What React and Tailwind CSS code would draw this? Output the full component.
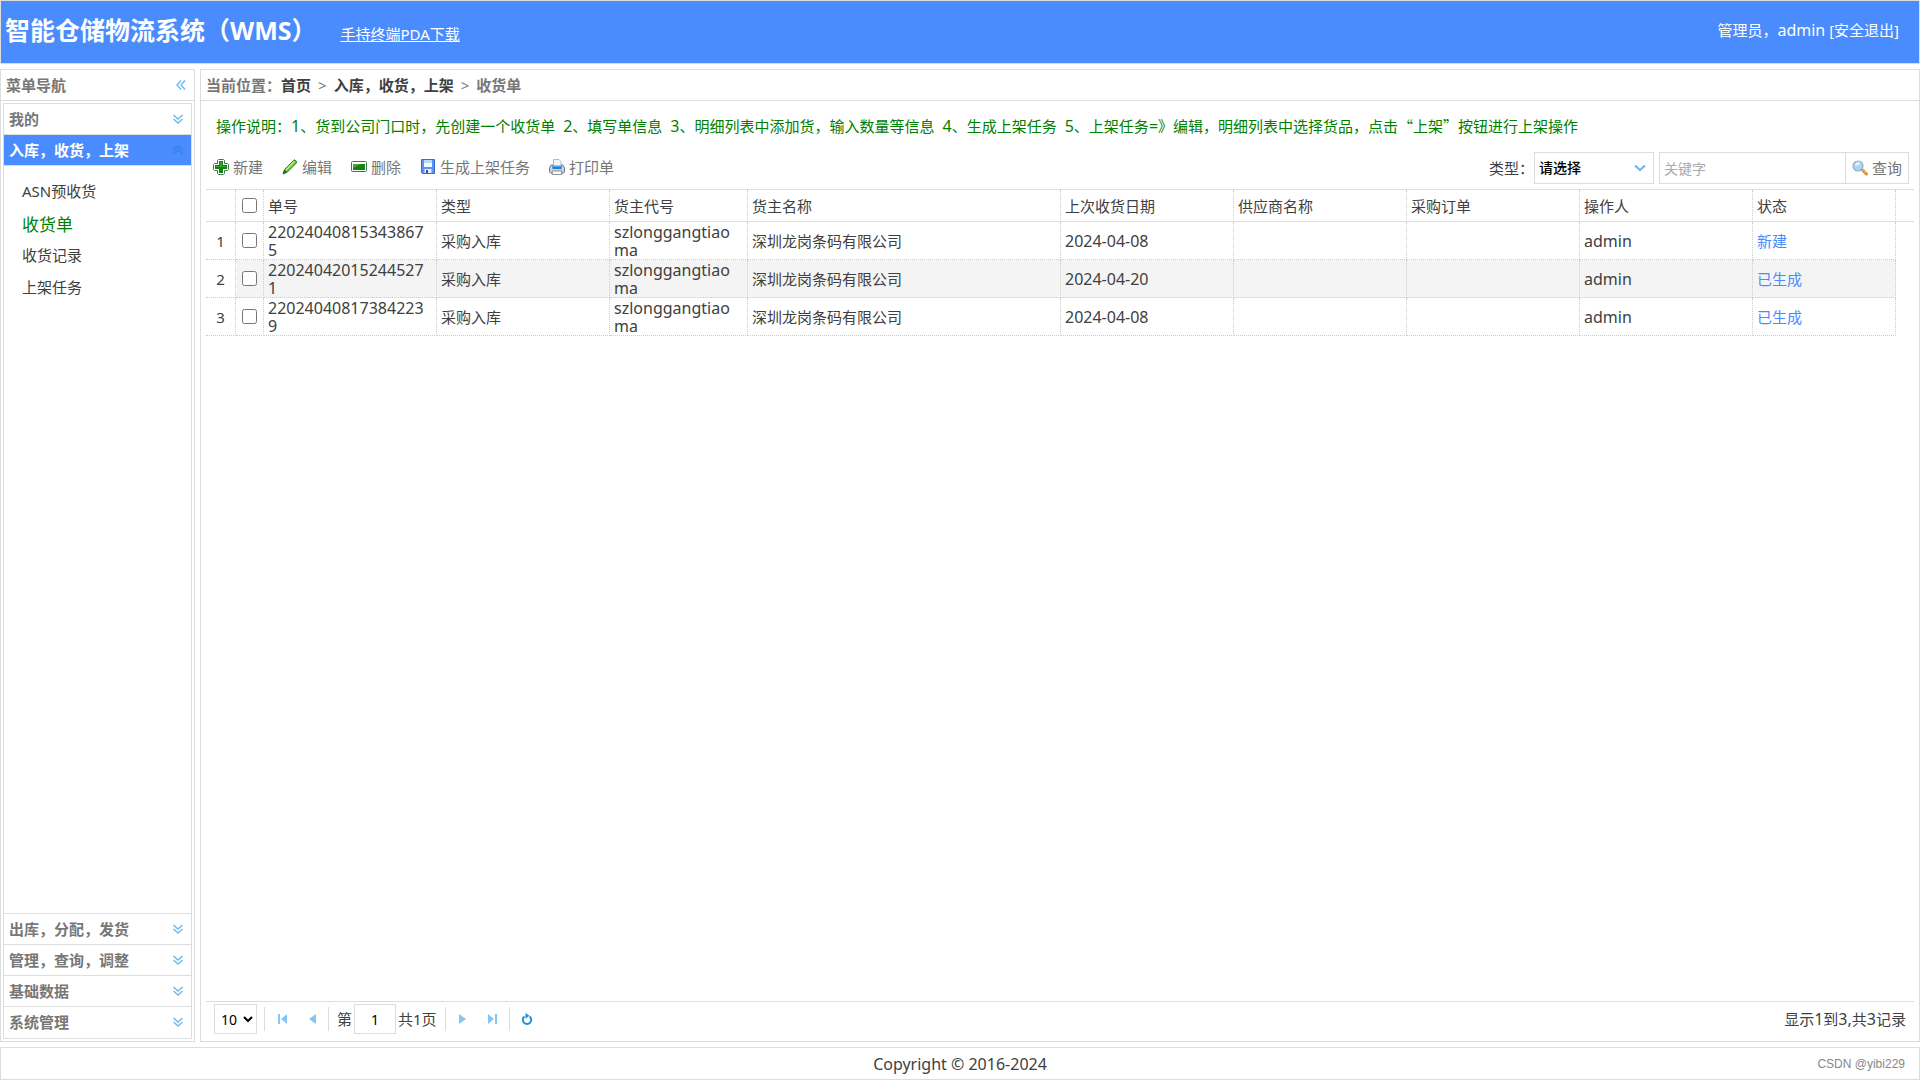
import React from "react";

const ROWS = [
  { no: "220240408153438675", type: "采购入库", code: "szlonggangtiaoma", name: "深圳龙岗条码有限公司", date: "2024-04-08", user: "admin", status: "新建" },
  { no: "220240420152445271", type: "采购入库", code: "szlonggangtiaoma", name: "深圳龙岗条码有限公司", date: "2024-04-20", user: "admin", status: "已生成" },
  { no: "220240408173842239", type: "采购入库", code: "szlonggangtiaoma", name: "深圳龙岗条码有限公司", date: "2024-04-08", user: "admin", status: "已生成" },
];

const HEADINGS = ["单号", "类型", "货主代号", "货主名称", "上次收货日期", "供应商名称", "采购订单", "操作人", "状态"];

const CELL = "border-r border-b border-dotted border-[#cccccc] px-1";

function DoubleChevron({ className }) {
  return (
    <svg className={className} width="10" height="10" viewBox="0 0 10 10" fill="none" stroke="currentColor" strokeWidth="1.4" aria-hidden="true">
      <path d="M.5 1l4.5 4 4.5-4M.5 5l4.5 4 4.5-4" />
    </svg>
  );
}

function AddIcon() {
  return (
    <svg width="16" height="16" viewBox="0 0 16 16" aria-hidden="true">
      <path d="M5.5.5h5l1 1v3h3l1 1v5l-1 1h-3v3l-1 1h-5l-1-1v-3h-3l-1-1v-5l1-1h3v-3z" fill="#fff" stroke="#3c7a4c" />
      <path d="M6 2h4v4h4v4h-4v4H6v-4H2V6h4z" fill="#128412" />
      <path d="M7 3h2v4h4v1H3V7h4z" fill="#4fb43c" opacity=".7" />
    </svg>
  );
}

function PencilIcon() {
  return (
    <svg width="16" height="16" viewBox="0 0 16 16" aria-hidden="true">
      <path d="M1 15l1.6-4.6L11 2l1.6-1.2 2.2 1.8-1 2L5.4 13z" fill="#5fc62a" stroke="#2f7d2a" strokeLinejoin="round" />
      <path d="M4 11l8.4-8.6" stroke="#c4f08c" strokeWidth="1.4" />
      <path d="M1 15l1.3-4 2.8 2.3z" fill="#2d5c30" />
    </svg>
  );
}

function RemoveIcon() {
  return (
    <svg width="16" height="16" viewBox="0 0 16 16" aria-hidden="true">
      <rect x=".5" y="2.5" width="15" height="10" rx="1" fill="#fff" stroke="#3c7a4c" />
      <rect x="2" y="5" width="12" height="6" fill="#128412" />
      <path d="M2 5h8l-8 4z" fill="#3fae30" />
    </svg>
  );
}

function SaveIcon() {
  return (
    <svg width="16" height="16" viewBox="0 0 16 16" aria-hidden="true">
      <path d="M1.5.5h13v14h-12l-1-1z" fill="#5d92f0" stroke="#3a6ad0" />
      <path d="M4 1h8v7H4z" fill="#f4f9fe" />
      <path d="M4 1h8v3H4z" fill="#b9dcfa" />
      <path d="M4.5 10h7v4h-7z" fill="#e8edf8" />
      <path d="M6 11h2v3H6z" fill="#2f4fb8" />
    </svg>
  );
}

function PrintIcon() {
  return (
    <svg width="16" height="16" viewBox="0 0 16 16" aria-hidden="true">
      <path d="M4.5.5H10l2 2v6H4.500z" fill="#f3f6fa" stroke="#b4bac4" />
      <path d="M.5 9L2 6h2l-.5 2.500h9L12 6h2l1.500 3v4L14 14.500H2L.5 13z" fill="#cfd4da" stroke="#747a84" />
      <path d="M4.500 7h7l1.300 3H3.200z" fill="#1f7fe6" />
      <path d="M4.800 6h6.400l.5 1.500H4.300z" fill="#8cc8fa" />
      <path d="M3 12h10l-.5 3.500h-9z" fill="#fff" stroke="#6f7680" strokeWidth=".8" />
    </svg>
  );
}

function SearchIcon() {
  return (
    <svg width="16" height="16" viewBox="0 0 16 16" aria-hidden="true">
      <path d="M10.500 10l4 4" stroke="#d98a2b" strokeWidth="3" strokeLinecap="round" />
      <path d="M10.500 9.500l4 4" stroke="#f8c26a" strokeWidth="1" />
      <circle cx="6" cy="6" r="5" fill="#a9d4f8" stroke="#9aaec6" strokeWidth="1.200" />
      <path d="M2.800 5.500a3.400 3.400 0 0 1 5.600-2.300c-1.200 1.900-3 2.600-5.600 2.300z" fill="#e9f6ff" />
    </svg>
  );
}

function SideHeader({ title, open, last }) {
  let look = "border-b border-[#dddddd] text-[#777777]";
  if (open) look = "border-b border-[#dddddd] bg-[#4a8bfd] text-white";
  if (last) look = "text-[#777777]";
  return (
    <button
      type="button"
      aria-expanded={!!open}
      className={"flex h-[31px] w-full shrink-0 items-center justify-between pr-2 pb-px pl-[5px] text-left font-bold " + look}
    >
      <span>{title}</span>
      <DoubleChevron className={open ? "rotate-180 text-[#2f86e0]" : "text-[#6cb8f0]"} />
    </button>
  );
}

function ToolButton({ icon, children }) {
  return (
    <button type="button" className="flex h-8 items-center gap-1 pb-0.5 text-[#777777]">
      {icon}
      <span>{children}</span>
    </button>
  );
}

function PagerButton({ label, children }) {
  return (
    <button type="button" aria-label={label} className="flex h-7 w-[30px] items-center justify-center text-[#86c5f4]">
      {children}
    </button>
  );
}

function Divider() {
  return <span className="h-6 w-px bg-[#dddddd]" />;
}

function Sidebar() {
  return (
    <aside className="flex w-[195px] shrink-0 flex-col border border-[#dddddd]">
      <div className="flex h-[31px] items-center justify-between border-b border-[#dddddd] pr-2 pb-px pl-[5px] font-bold text-[#777777]">
        <h2>菜单导航</h2>
        <button type="button" aria-label="收起菜单">
          <DoubleChevron className="rotate-90 text-[#6cb8f0]" />
        </button>
      </div>
      <div className="flex grow flex-col p-0.5">
        <div className="flex grow flex-col border border-[#dddddd]">
          <SideHeader title="我的" />
          <SideHeader title="入库，收货，上架" open />
          <nav className="flex grow flex-col border-b border-[#dddddd] pt-[9px] pl-[18px] leading-8 text-[#404040]">
            <a href="#asn">ASN预收货</a>
            <a href="#receipt" className="pt-1 text-[17px] leading-7 text-[#008000]">收货单</a>
            <a href="#records">收货记录</a>
            <a href="#putaway">上架任务</a>
          </nav>
          <SideHeader title="出库，分配，发货" />
          <SideHeader title="管理，查询，调整" />
          <SideHeader title="基础数据" />
          <SideHeader title="系统管理" last />
        </div>
      </div>
    </aside>
  );
}

function Instructions() {
  return (
    <div className="flex flex-wrap gap-x-2 pt-[15px] pb-4 pl-[10px] text-[#008000]">
      <span>操作说明：<span className="text-[16px]">1</span>、货到公司门口时，先创建一个收货单</span>
      <span><span className="text-[16px]">2</span>、填写单信息</span>
      <span><span className="text-[16px]">3</span>、明细列表中添加货，输入数量等信息</span>
      <span><span className="text-[16px]">4</span>、生成上架任务</span>
      <span>
        <span className="text-[16px]">5</span>、上架任务<span className="text-[16px]">=</span>》编辑，明细列表中选择货品，点击<span className="font-['Noto_Sans_CJK_SC',sans-serif]">“上架”</span>按钮进行上架操作
      </span>
    </div>
  );
}

function Toolbar() {
  return (
    <div className="flex items-center justify-between pr-[5px] pb-[5px] pl-[7px]">
      <div className="flex items-center gap-[19px]">
        <ToolButton icon={<AddIcon />}>新建</ToolButton>
        <ToolButton icon={<PencilIcon />}>编辑</ToolButton>
        <ToolButton icon={<RemoveIcon />}>删除</ToolButton>
        <ToolButton icon={<SaveIcon />}>生成上架任务</ToolButton>
        <ToolButton icon={<PrintIcon />}>打印单</ToolButton>
      </div>
      <form className="flex items-center">
        <label htmlFor="kind">类型：</label>
        <div className="relative w-[120px]">
          <select id="kind" className="h-8 w-full appearance-none border border-[#dddddd] bg-white pl-1 text-sm font-medium text-black">
            <option>请选择</option>
          </select>
          <svg className="pointer-events-none absolute top-3 right-2" width="12" height="8" viewBox="0 0 12 8" fill="none" stroke="#6cb8f0" strokeWidth="2.200" aria-hidden="true">
            <path d="M1 1.500l5 4.500 5-4.500" />
          </svg>
        </div>
        <input type="text" aria-label="关键字" placeholder="关键字" className="ml-[5px] h-8 w-[187px] border border-[#dddddd] px-1 text-sm placeholder:text-[#aaaaaa]" />
        <button type="button" className="-ml-px flex h-8 items-center gap-1 border border-[#dddddd] px-1.5 text-[#777777]">
          <SearchIcon />
          <span>查询</span>
        </button>
      </form>
    </div>
  );
}

function Grid() {
  return (
    <table className="w-full table-fixed border-separate border-spacing-0 border-t border-[#dddddd] text-left">
      <colgroup>
        <col className="w-[30px]" />
        <col className="w-[28px]" />
        <col className="w-[173px]" />
        <col className="w-[173px]" />
        <col className="w-[138px]" />
        <col className="w-[313px]" />
        <col className="w-[173px]" />
        <col className="w-[173px]" />
        <col className="w-[173px]" />
        <col className="w-[173px]" />
        <col className="w-[143px]" />
        <col className="w-[18px]" />
      </colgroup>
      <thead>
        <tr className="h-8 [&>th]:border-b [&>th]:border-b-[#dddddd] [&>th]:[border-bottom-style:solid]">
          <th className="border-r border-dotted border-[#cccccc]" />
          <th className="border-r border-dotted border-[#cccccc]">
            <input type="checkbox" aria-label="全选" className="mx-auto block h-[15px] w-[15px]" />
          </th>
          {HEADINGS.map((h) => (
            <th key={h} scope="col" className="border-r border-dotted border-[#cccccc] px-1 font-normal">{h}</th>
          ))}
          <th />
        </tr>
      </thead>
      <tbody>
        {ROWS.map((r, i) => (
          <tr key={r.no} className="h-[38px]">
            <td className="border-r border-b border-dotted border-[#cccccc] text-center">{i + 1}</td>
            <td className={i % 2 ? "border-r border-b border-dotted border-[#cccccc] bg-[#f4f4f4]" : "border-r border-b border-dotted border-[#cccccc]"}>
              <input type="checkbox" aria-label={"选择 " + r.no} className="mx-auto block h-[15px] w-[15px]" />
            </td>
            {[r.no, r.type, r.code, r.name, r.date, "", "", r.user, r.status].map((v, c) => (
              <td key={c} className={i % 2 ? CELL + " bg-[#f4f4f4]" : CELL}>
                {c === 8 ? (
                  <a href="#status" className="text-[#4a8bfd]">{v}</a>
                ) : c === 0 || c === 2 || c === 4 || c === 7 ? (
                  <span className="block text-base leading-[18px] break-all">{v}</span>
                ) : (
                  v
                )}
              </td>
            ))}
            <td />
          </tr>
        ))}
      </tbody>
    </table>
  );
}

function Pager() {
  return (
    <div className="flex items-center justify-between border-t border-[#dddddd] pt-0.5 pr-2 pb-[7px] pl-2">
      <div className="flex items-center">
        <select aria-label="每页条数" className="mr-[7px] h-[30px] w-[43px] border border-[#dddddd] bg-white pl-0.5 text-sm text-black">
          <option>10</option>
        </select>
        <Divider />
        <div className="flex pr-px pl-0.5">
          <PagerButton label="首页">
            <svg width="9" height="10" viewBox="0 0 9 10" fill="currentColor" aria-hidden="true"><path d="M0 0h2v10H0zM9 0v10L3 5z" /></svg>
          </PagerButton>
          <PagerButton label="上一页">
            <svg width="7" height="10" viewBox="0 0 7 10" fill="currentColor" aria-hidden="true"><path d="M7 0v10L0 5z" /></svg>
          </PagerButton>
        </div>
        <Divider />
        <label htmlFor="page" className="ml-2">第</label>
        <input id="page" type="text" defaultValue="1" className="mx-0.5 h-[30px] w-[42px] border border-[#dddddd] text-center text-sm text-black" />
        <span className="pr-2">共1页</span>
        <Divider />
        <div className="flex pr-px pl-0.5">
          <PagerButton label="下一页">
            <svg width="7" height="10" viewBox="0 0 7 10" fill="currentColor" aria-hidden="true"><path d="M0 0v10l7-5z" /></svg>
          </PagerButton>
          <PagerButton label="末页">
            <svg width="9" height="10" viewBox="0 0 9 10" fill="currentColor" aria-hidden="true"><path d="M7 0h2v10H7zM0 0v10l6-5z" /></svg>
          </PagerButton>
        </div>
        <Divider />
        <div className="flex pl-0.5">
          <PagerButton label="刷新">
            <svg width="12" height="13" viewBox="0 0 12 13" aria-hidden="true">
              <path d="M3.400 3.500a4.200 4.200 0 1 0 5.200 0" fill="none" stroke="#1d8ee0" strokeWidth="2" />
              <path d="M4.500 0l4 2.800-4 3z" fill="#1d8ee0" />
            </svg>
          </PagerButton>
        </div>
      </div>
      <p>
        显示<span className="text-[16px]">1</span>到<span className="text-[16px]">3,</span>共<span className="text-[16px]">3</span>记录
      </p>
    </div>
  );
}

export default function App() {
  return (
    <div className="flex min-h-screen flex-col bg-white font-['Noto_Sans','Noto_Sans_CJK_SC',sans-serif] text-[15px] leading-5 text-[#404040]">
      <header className="flex h-16 items-center justify-between border border-[#dddddd] bg-[#4a8bfd] pr-5 pb-1 pl-1 text-white">
        <div className="flex items-baseline gap-6">
          <h1 className="text-[25px] leading-8 font-bold">智能仓储物流系统（WMS）</h1>
          <a href="#pda" className="underline">手持终端PDA下载</a>
        </div>
        <p>
          管理员，<span className="text-[16px]">admin</span> <a href="#logout">[安全退出]</a>
        </p>
      </header>

      <div className="flex grow gap-[5px] py-[5px]">
        <Sidebar />
        <main className="flex min-w-0 grow flex-col border border-[#dddddd]">
          <nav aria-label="当前位置" className="flex h-[31px] shrink-0 items-center border-b border-[#dddddd] pb-px pl-[5px] font-bold text-[#777777]">
            <span>当前位置：</span>
            <a href="#home" className="text-[#404040]">首页</a>
            <span className="px-[7px] font-normal">&gt;</span>
            <a href="#inbound" className="text-[#404040]">入库，收货，上架</a>
            <span className="px-[7px] font-normal">&gt;</span>
            <span>收货单</span>
          </nav>
          <div className="flex grow flex-col px-[5px]">
            <Instructions />
            <Toolbar />
            <Grid />
            <div className="grow" />
            <Pager />
          </div>
        </main>
      </div>

      <footer className="grid h-[33px] grid-cols-3 items-center border border-[#dddddd]">
        <span />
        <p className="text-center text-base">Copyright © 2016-2024</p>
        <p className="pr-[14px] text-right font-['Liberation_Sans',sans-serif] text-xs text-[#888888]">CSDN @yibi229</p>
      </footer>
    </div>
  );
}
